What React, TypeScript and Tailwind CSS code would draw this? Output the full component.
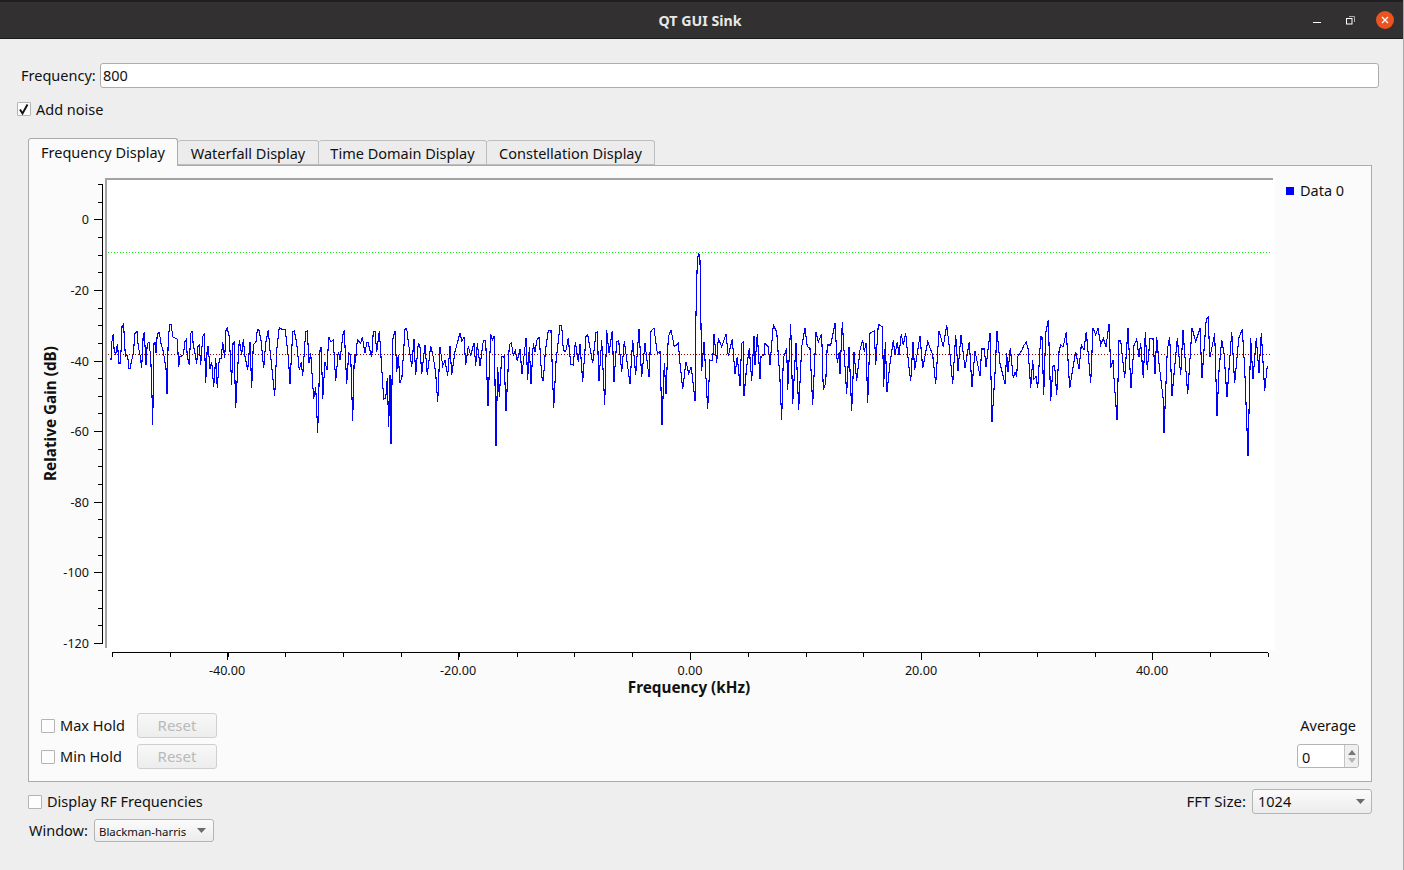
import React from 'react';

// trace points read from the reference as page coordinates
const zoomA = [33,180,35,130,38,108,40,105,42,145,47,165,50,140,53,135,56,190,60,190,63,155,66,80,70,73,73,105,76,170,80,165,83,170,87,205,90,205,100,160,105,100,111,95,115,140,120,165,125,205,130,100,133,98,138,195,142,130,147,127,152,170,155,250,158,375,162,130,168,127,168,160,172,100,178,98,183,130,190,155,198,205,201,283,205,110,210,73,214,75,218,110,232,118,236,200,240,170,250,165,255,125,259,118,262,170,268,195,272,100,276,95,280,135,285,160,290,193,293,140,298,135,302,195,308,110,313,103,317,250,322,140,325,140,330,208,335,185,341,262,347,175,352,265,358,175,364,175,368,125,374,175,378,90,382,85,388,110,395,255,398,130,402,127,407,325,413,205,418,120,425,165,430,118,435,170,443,210,450,125,455,265,460,135,468,125,472,90,476,88,483,120,491,205,497,130,505,90,510,150,524,288,530,150,538,82,545,88,556,90,565,170,570,252,578,95,583,92,590,130,598,210,604,187,608,228,617,95,622,92,627,190,632,160,641,297,647,260,653,398,660,150,664,140,668,297,675,185,681,210,686,110,692,125,700,120,707,243,715,155,720,180,730,95,733,92,740,252,746,160,752,165,758,362,763,165,766,190,772,120,782,130,787,110,795,160,800,128,804,128,815,172,820,95,825,95,830,155,838,92,843,170,851,297,857,295,862,235,866,380,870,225,873,432,878,120,885,92,890,215,895,165];
const zoomB = [0,430,6,410,15,268,20,265,25,305,35,380,42,298,47,405,55,308,60,320,65,402,75,315,82,405,92,318,100,352,107,400,113,487,120,320,128,378,135,362,143,408,150,317,155,405,165,335,180,278,185,303,192,292,197,375,205,318,212,348,222,308,227,378,232,310,240,378,250,302,257,302,264,497,272,282,277,300,283,287,288,618,293,380,298,470,305,350,312,348,318,512,328,315,334,308,340,345,346,332,352,362,360,328,366,402,378,295,383,420,388,320,393,432,400,310,405,335,412,295,418,293,425,410,430,424,436,335,445,272,453,272,461,505,468,365,480,257,485,257,490,330,497,335,505,295,512,372,520,375,526,306,535,365,540,312,548,425,558,290,563,285,578,370,588,278,592,276,597,423,605,300,614,495,620,270,627,340,637,272,642,425,650,305,656,302,665,395,673,303,690,432,698,300,707,405,717,267,725,410,735,310,747,412,753,273,762,265,772,340,780,335,786,555,793,370,798,462,805,290,813,270,823,320,835,310,840,370,848,447,858,365,866,400,874,380,885,482,888,220,892,60,896,38,900,60,905,392,912,305,923,507,930,360,938,362,942,282,950,368,955,295,965,320,978,282,985,348,997,297,1005,403,1012,350,1020,437];
const zoomC = [0,255,5,130,10,125,12,288,20,200,28,145,35,243,42,108,45,195,52,103,60,237,63,170,72,165,75,130,85,140,90,195,100,75,110,95,120,240,125,360,130,175,140,145,143,270,152,72,158,312,168,130,176,330,185,140,195,85,202,140,210,145,218,315,228,97,235,125,245,102,250,270,257,250,262,135,272,135,285,70,292,190,298,155,300,222,307,67,320,282,327,140,335,332,342,157,350,243,360,150,368,120,373,155,378,130,383,310,390,100,403,92,407,195,415,73,427,80,431,260,436,125,441,275,450,190,460,120,465,165,472,125,477,165,484,102,490,135,497,100,506,195,512,243,519,127,524,210,540,107,548,205,563,125,578,165,587,253,597,92,610,140,620,75,628,140,638,253,647,105,654,212,663,105,675,205,688,125,696,262,705,152,720,228,725,147,733,147,738,200,750,100,756,365,765,220,771,92,780,190,795,252,800,160];
const zoomD = [12,215,19,143,28,235,33,218,38,230,41,170,55,148,60,135,67,127,72,145,80,265,86,180,90,237,96,230,101,265,110,110,114,112,119,285,125,100,133,60,140,303,147,198,152,197,158,285,165,155,170,135,178,140,187,95,197,265,205,215,215,155,225,208,232,135,240,150,247,95,260,250,267,83,275,105,282,83,290,135,298,115,306,140,315,73,320,205,327,180,330,235,339,360,345,122,350,122,362,235,372,85,381,265,390,135,398,118,405,170,410,130,418,235,424,97,430,210,438,115,447,115,453,222,458,110,465,190,478,300,480,400,490,150,497,110,504,288,520,115,530,225,537,90,551,283,564,83,575,125,588,85,594,235,607,55,612,52,618,172,632,100,639,348,645,212,653,120,660,160,669,292,683,95,692,250,704,115,715,88,722,205,732,468,740,115,747,237,757,115,765,220,772,98,782,272,790,197];

const toPage = (list: number[], ox: number, oy: number) => {
  const out: string[] = [];
  for (let i = 0; i < list.length; i += 2) {
    out.push(`${(ox + list[i] / 3).toFixed(1)},${(oy + list[i + 1] / 3).toFixed(1)}`);
  }
  return out;
};

const trace = [
  ...toPage(zoomA, 100, 300),
  ...toPage(zoomB, 400, 240),
  ...toPage(zoomC, 740, 300),
  ...toPage(zoomD, 1004, 300),
].join(' ');

const yLabels = [
  { y: 219, t: '0' },
  { y: 290, t: '-20' },
  { y: 361, t: '-40' },
  { y: 431, t: '-60' },
  { y: 502, t: '-80' },
  { y: 572, t: '-100' },
  { y: 643, t: '-120' },
];
const xLabels = [
  { x: 227, t: '-40.00' },
  { x: 458, t: '-20.00' },
  { x: 690, t: '0.00' },
  { x: 921, t: '20.00' },
  { x: 1152, t: '40.00' },
];

const yMinor: number[] = [];
for (let i = 0; i < 27; i++) yMinor.push(184 + i * 17.65);
const xMinor: number[] = [];
for (let i = 0; i < 21; i++) xMinor.push(112 + i * 57.8);

const Box = ({ checked }: { checked?: boolean }) => (
  <span className="w-[14px] h-[14px] border border-[#b4b4b4] bg-[#fdfdfd] rounded-[1px] flex items-center justify-center shrink-0">
    {checked && (
      <svg width="12" height="12" viewBox="0 0 12 12">
        <path d="M2 6.5L4.5 10.5L9.5 1.5" stroke="#111" strokeWidth="1.9" fill="none" />
      </svg>
    )}
  </span>
);

const Caret = () => (
  <svg width="9" height="5" viewBox="0 0 9 5"><path d="M0 0h9L4.5 5z" fill="#6b6b6b" /></svg>
);

const ResetButton = () => (
  <button className="w-[80px] h-[25px] rounded-[3px] border border-[#cfcfcf] bg-gradient-to-b from-[#f8f8f8] to-[#ededed] text-[#b9b9b9] text-[15px]">
    Reset
  </button>
);

const HoldRow = ({ label }: { label: string }) => (
  <div className="flex items-center h-[25px]">
    <Box />
    <span className="ml-[5px] w-[77px]">{label}</span>
    <ResetButton />
  </div>
);

const Plot = () => (
  <svg width="1340" height="535" viewBox="29 166 1340 535" className="block" fontFamily="'Noto Sans', sans-serif">
    <rect x="105" y="178" width="1170" height="472" fill="#ffffff" />
    <path d="M105 179H1273M106 179V648" stroke="#a3a3a3" strokeWidth="2" fill="none" />
    <path d="M102.5 184V644" stroke="#000" fill="none" />
    {yMinor.map((y) => (
      <path key={y} d={`M98 ${Math.round(y) + 0.5}H102`} stroke="#000" />
    ))}
    {yLabels.map((l) => (
      <g key={l.t}>
        <path d={`M94 ${l.y + 0.5}H102`} stroke="#000" />
        <text x="89" y={l.y + 5} textAnchor="end" fontSize="12.6" fill="#111">{l.t}</text>
      </g>
    ))}
    <path d="M112 652.5H1268" stroke="#000" />
    {xMinor.map((x) => (
      <path key={x} d={`M${Math.round(x) + 0.5} 653V657`} stroke="#000" />
    ))}
    {xLabels.map((l) => (
      <g key={l.t}>
        <path d={`M${l.x + 0.5} 653V660`} stroke="#000" />
        <text x={l.x} y="675" textAnchor="middle" fontSize="12.6" fill="#111">{l.t}</text>
      </g>
    ))}
    <path d="M108 252.5H1272" stroke="#00f000" strokeDasharray="1 2" fill="none" />
    <polyline points={trace} fill="none" stroke="#0000ff" strokeWidth="1.1" shapeRendering="crispEdges" />
    <path d="M108 354.5H1272" stroke="#8b0000" strokeDasharray="1 2" fill="none" />
    <text x="689" y="693" textAnchor="middle" fontSize="15.3" fontWeight="700" fill="#111">Frequency (kHz)</text>
    <text transform="translate(55.5 413.5) rotate(-90)" textAnchor="middle" fontSize="15.3" fontWeight="700" fill="#111">Relative Gain (dB)</text>
    <rect x="1286" y="187" width="8" height="8" fill="#0000ff" />
    <text x="1300" y="196" fontSize="14.5" fill="#111">Data 0</text>
  </svg>
);

const tabs = [
  { label: 'Waterfall Display', width: 'w-[141px]' },
  { label: 'Time Domain Display', width: 'w-[168px]' },
  { label: 'Constellation Display', width: 'w-[168px]' },
];

export default function App() {
  return (
    <div className="w-[1404px] h-[870px] overflow-hidden flex flex-col bg-[#eeeeee] text-[#111] text-[14.5px] border-r border-[#a8a8a8] font-['Noto_Sans',sans-serif]">
      {/* title bar */}
      <div className="h-[39px] shrink-0 bg-[#323030] border-t-2 border-t-[#1f1f1f] border-b border-b-[#1a1a1a] flex items-center relative">
        <span className="flex-1 text-center font-bold text-[14.2px] text-[#e8e8e8] pt-[2px] pr-[3px]">QT GUI Sink</span>
        <div className="absolute right-[9px] top-[9px] flex items-center">
          <span className="w-[8px] h-px bg-white mt-[4px] mr-[25px]"></span>
          <svg width="9" height="9" viewBox="0 0 9 9" className="mr-[21px]">
            <path d="M3 .5h5.5V6" stroke="#aaa" fill="none" />
            <rect x=".5" y="2.5" width="5.5" height="5.5" stroke="#fff" fill="none" />
          </svg>
          <span className="w-[18px] h-[18px] rounded-full bg-[#e95420] flex items-center justify-center">
            <svg width="8" height="8" viewBox="0 0 8 8"><path d="M1 1l6 6M7 1l-6 6" stroke="#fff" strokeWidth="1.3" /></svg>
          </span>
        </div>
      </div>

      <div className="flex-1 flex flex-col pl-[17px] pr-[24px] pt-[24px]">
        <div className="flex items-center pl-[4px] h-[25px]">
          <span className="w-[79px]">Frequency:</span>
          <div className="w-[1279px] shrink-0 h-[25px] bg-white border border-[#adadad] rounded-[3px] pl-[2px] leading-[23px]">800</div>
        </div>
        <div className="flex items-center mt-[14px] h-[14px]">
          <Box checked />
          <span className="ml-[5px] pt-[2px]">Add noise</span>
        </div>

        {/* tabs */}
        <div className="ml-[11px] mt-[22px] flex items-end h-[27px]">
          <div className="h-[28px] w-[150px] -mb-px z-10 bg-[#fbfbfb] border border-b-0 border-[#ababab] rounded-t-[3px] flex items-center justify-center">Frequency Display</div>
          {tabs.map((t) => (
            <div key={t.label} className={`${t.width} h-[25px] pt-[2px] bg-[#ececec] border border-l-0 border-[#bdbdbd] rounded-t-[3px] flex items-center justify-center`}>{t.label}</div>
          ))}
        </div>

        {/* panel */}
        <div className="ml-[11px] w-[1344px] h-[617px] bg-[#fbfbfb] border border-[#ababab] flex flex-col shrink-0">
          <Plot />
          <div className="flex justify-between items-start pl-[12px] pr-[12px] mt-[12px]">
            <div className="flex flex-col gap-[6px]">
              <HoldRow label="Max Hold" />
              <HoldRow label="Min Hold" />
            </div>
            <div className="flex flex-col items-end">
              <span className="h-[25px] leading-[25px] mr-[3px]">Average</span>
              <div className="mt-[6px] w-[62px] h-[24px] bg-white border border-[#b4b4b4] rounded-[3px] flex">
                <span className="flex-1 pl-[4px] leading-[24px]">0</span>
                <span className="w-[14px] border-l border-[#c4c4c4] bg-[#efefef] rounded-r-[3px] flex flex-col items-center justify-center gap-[3px]">
                  <svg width="8" height="5" viewBox="0 0 8 5"><path d="M0 5L4 0l4 5z" fill="#777" /></svg>
                  <svg width="8" height="5" viewBox="0 0 8 5"><path d="M0 0h8L4 5z" fill="#b5b5b5" /></svg>
                </span>
              </div>
            </div>
          </div>
        </div>

        {/* bottom controls */}
        <div className="ml-[11px] w-[1344px] flex justify-between items-center mt-[7px] h-[25px]">
          <div className="flex items-center">
            <Box />
            <span className="ml-[5px]">Display RF Frequencies</span>
          </div>
          <div className="flex items-center">
            <span className="mr-[6px] text-[15px]">FFT Size:</span>
            <div className="w-[120px] h-[25px] rounded-[3px] border border-[#b4b4b4] bg-gradient-to-b from-[#fbfbfb] to-[#ececec] flex items-center justify-between pl-[5px] pr-[6px]">
              <span>1024</span>
              <Caret />
            </div>
          </div>
        </div>
        <div className="ml-[12px] flex items-center mt-[5px] h-[23px]">
          <span className="w-[65px] pt-[1px]">Window:</span>
          <div className="w-[120px] h-[23px] rounded-[3px] border border-[#b4b4b4] bg-gradient-to-b from-[#fbfbfb] to-[#ececec] flex items-center justify-between pl-[4px] pr-[7px] text-[11.4px]">
            <span className="pt-[2px]">Blackman-harris</span>
            <Caret />
          </div>
        </div>
      </div>
    </div>
  );
}
